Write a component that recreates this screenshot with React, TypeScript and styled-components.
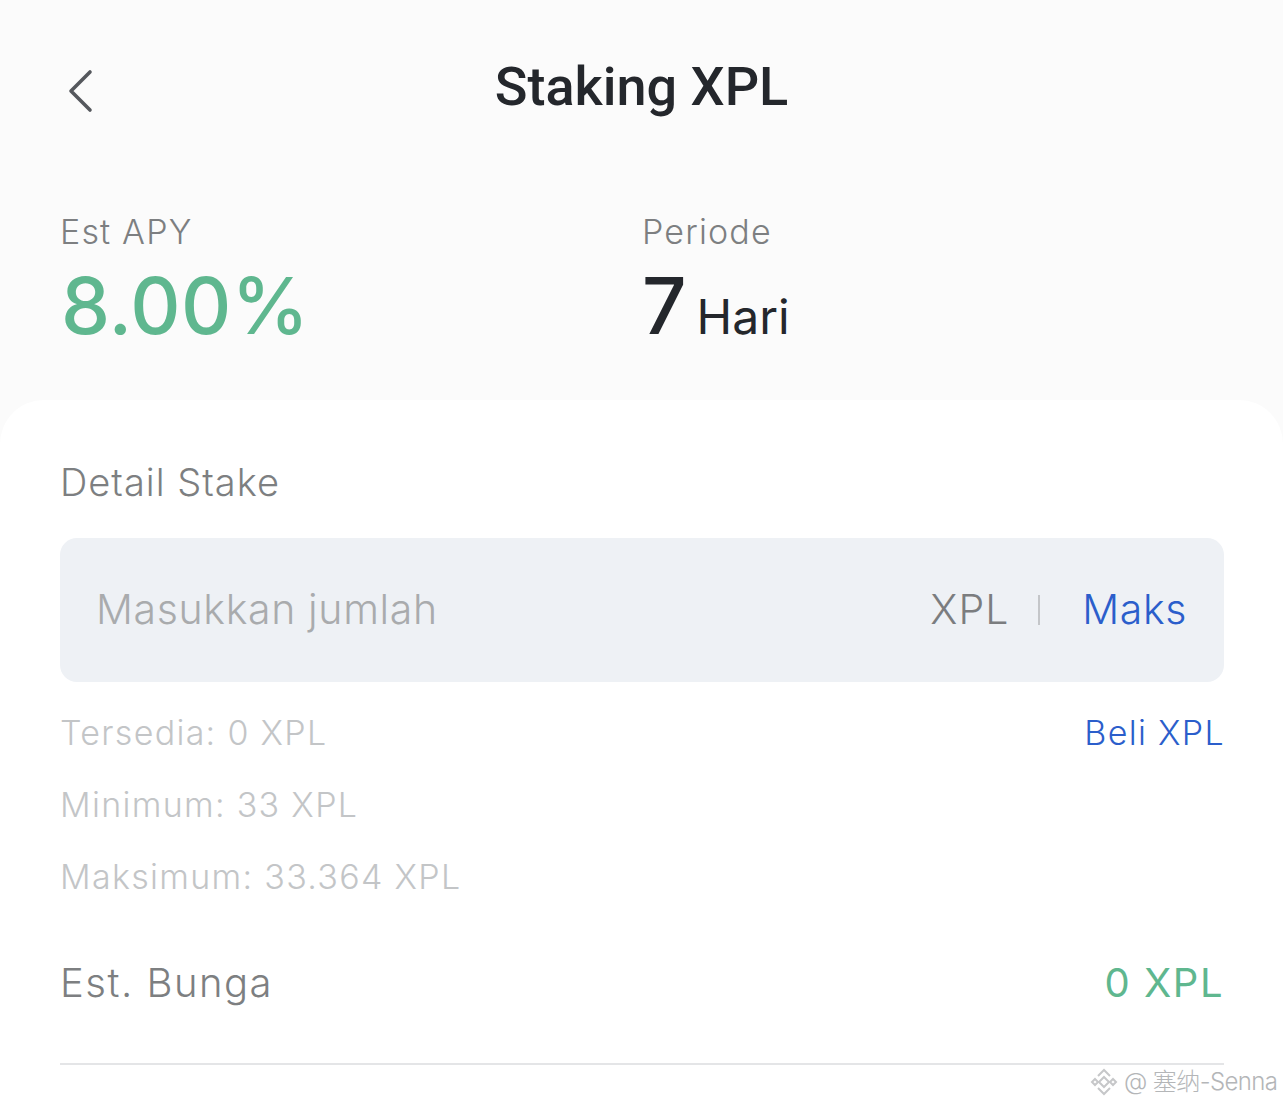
import React from "react";
import styled, { createGlobalStyle } from "styled-components";

const GlobalStyle = createGlobalStyle`
  html, body {
    margin: 0;
    padding: 0;
    background: #fbfbfb;
    font-family: "Inter", "Noto Sans CJK SC", sans-serif;
  }
`;

const Page = styled.div`
  width: 1283px;
  height: 1107px;
  overflow: hidden;
  background: #fbfbfb;
  position: relative;
`;

const Header = styled.div`
  height: 174px;
  display: grid;
  grid-template-columns: 60px 1fr 60px;
  padding: 59px 0 0;
  box-sizing: border-box;
  align-items: start;
`;

const BackIcon = styled.svg`
  width: 26px;
  height: 44px;
  margin: 10px 0 0 68px;
  display: block;
`;

const Title = styled.h1`
  margin: 0;
  text-align: center;
  font-family: "Roboto", sans-serif;
  font-size: 54px;
  line-height: 56px;
  font-weight: 500;
  color: #24272c;
`;

const Stats = styled.div`
  height: 226px;
  display: grid;
  grid-template-columns: 582px 1fr;
  padding-left: 60px;
  box-sizing: border-box;
`;

const Stat = styled.div`
  display: flex;
  flex-direction: column;
`;

const StatLabel = styled.div`
  margin-top: 38px;
  font-size: 34px;
  line-height: 40px;
  letter-spacing: 1.15px;
  font-weight: 300;
  color: #7d7f81;
`;

const Apy = styled.div`
  margin: 14px 0 0 1px;
  font-size: 78px;
  line-height: 80px;
  letter-spacing: 0.2px;
  font-weight: 450;
  color: #5fb78f;
`;

const Period = styled.div`
  margin-top: 14px;
  display: flex;
  align-items: baseline;
  gap: 10px;
  line-height: 80px;
  color: #24272c;
`;

const PeriodValue = styled.span`
  font-size: 78px;
  font-weight: 450;
`;

const PeriodUnit = styled.span`
  font-size: 48px;
  font-weight: 420;
`;

const Card = styled.div`
  height: 707px;
  background: #fff;
  border-radius: 44px 44px 0 0;
  padding: 59px 59px 0 60px;
  box-sizing: border-box;
`;

const SectionLabel = styled.div`
  font-size: 38px;
  line-height: 46px;
  letter-spacing: 1px;
  font-weight: 300;
  color: #7d7f81;
`;

const Field = styled.div`
  margin-top: 33px;
  height: 144px;
  background: #eef1f5;
  border-radius: 17px;
  display: flex;
  align-items: center;
  padding: 0 37px 2px 36px;
  box-sizing: border-box;
  font-size: 41px;
  letter-spacing: 1px;
  font-weight: 300;
`;

const Placeholder = styled.div`
  flex: 1;
  letter-spacing: 0.65px;
  color: #a9abad;
`;

const Unit = styled.div`
  color: #7b7d7f;
`;

const Divider = styled.div`
  width: 2px;
  height: 30px;
  background: #c4c6c9;
  margin: 2px 42px 0 29px;
`;

const Link = styled.div`
  letter-spacing: 0.6px;
  color: #2b5ecb;
`;

const Info = styled.div`
  margin-top: 14px;
`;

const InfoRow = styled.div`
  display: flex;
  justify-content: space-between;
  height: 72px;
  align-items: center;
  font-size: 34px;
  letter-spacing: 1.3px;
  font-weight: 300;
  color: #c3c5c7;
`;

const BuyLink = styled.div`
  margin-right: -1px;
  color: #2b5ecb;
`;

const Interest = styled.div`
  margin-top: 47px;
  padding: 0 0 58px;
  display: flex;
  justify-content: space-between;
  align-items: center;
  height: 46px;
  font-size: 40px;
  letter-spacing: 1.5px;
  font-weight: 300;
  color: #7d7f81;
  border-bottom: 2px solid #e4e5e7;
`;

const InterestValue = styled.div`
  color: #5fb78f;
  font-weight: 400;
`;

const Watermark = styled.div`
  position: absolute;
  left: 1090px;
  top: 1066px;
  display: flex;
  align-items: center;
  gap: 6px;
  white-space: nowrap;
  font-size: 24px;
  line-height: 32px;
  letter-spacing: -0.6px;
  font-weight: 300;
  color: #b4b6b8;
`;

const WatermarkLogo = styled.svg`
  width: 28px;
  height: 30px;
  display: block;
`;

export default function App() {
  return (
    <Page>
      <GlobalStyle />
      <Header>
        <BackIcon viewBox="0 0 26 44">
          <path
            d="M22 3 L3 22 L22 41"
            fill="none"
            stroke="#55585d"
            strokeWidth="3.6"
            strokeLinecap="round"
            strokeLinejoin="round"
          />
        </BackIcon>
        <Title>Staking XPL</Title>
      </Header>
      <Stats>
        <Stat>
          <StatLabel>Est APY</StatLabel>
          <Apy>8.00%</Apy>
        </Stat>
        <Stat>
          <StatLabel>Periode</StatLabel>
          <Period>
            <PeriodValue>7</PeriodValue>
            <PeriodUnit>Hari</PeriodUnit>
          </Period>
        </Stat>
      </Stats>
      <Card>
        <SectionLabel>Detail Stake</SectionLabel>
        <Field>
          <Placeholder>Masukkan jumlah</Placeholder>
          <Unit>XPL</Unit>
          <Divider />
          <Link>Maks</Link>
        </Field>
        <Info>
          <InfoRow>
            <span>Tersedia: 0 XPL</span>
            <BuyLink>Beli XPL</BuyLink>
          </InfoRow>
          <InfoRow>
            <span>Minimum: 33 XPL</span>
          </InfoRow>
          <InfoRow>
            <span>Maksimum: 33.364 XPL</span>
          </InfoRow>
        </Info>
        <Interest>
          <span>Est. Bunga</span>
          <InterestValue>0 XPL</InterestValue>
        </Interest>
      </Card>
      <Watermark>
        <WatermarkLogo viewBox="0 0 28 30">
          <g fill="none" stroke="#c6c7c9" strokeWidth="2">
            <path d="M8 9 L14 3 L20 9" />
            <path d="M14 10 L19 15 L14 20 L9 15 Z" />
            <path d="M5 12 L8 15 L5 18 L2 15 Z" />
            <path d="M23 12 L26 15 L23 18 L20 15 Z" />
            <path d="M8 21 L14 27 L20 21" />
          </g>
        </WatermarkLogo>
        <span>@ 塞纳-Senna</span>
      </Watermark>
    </Page>
  );
}
